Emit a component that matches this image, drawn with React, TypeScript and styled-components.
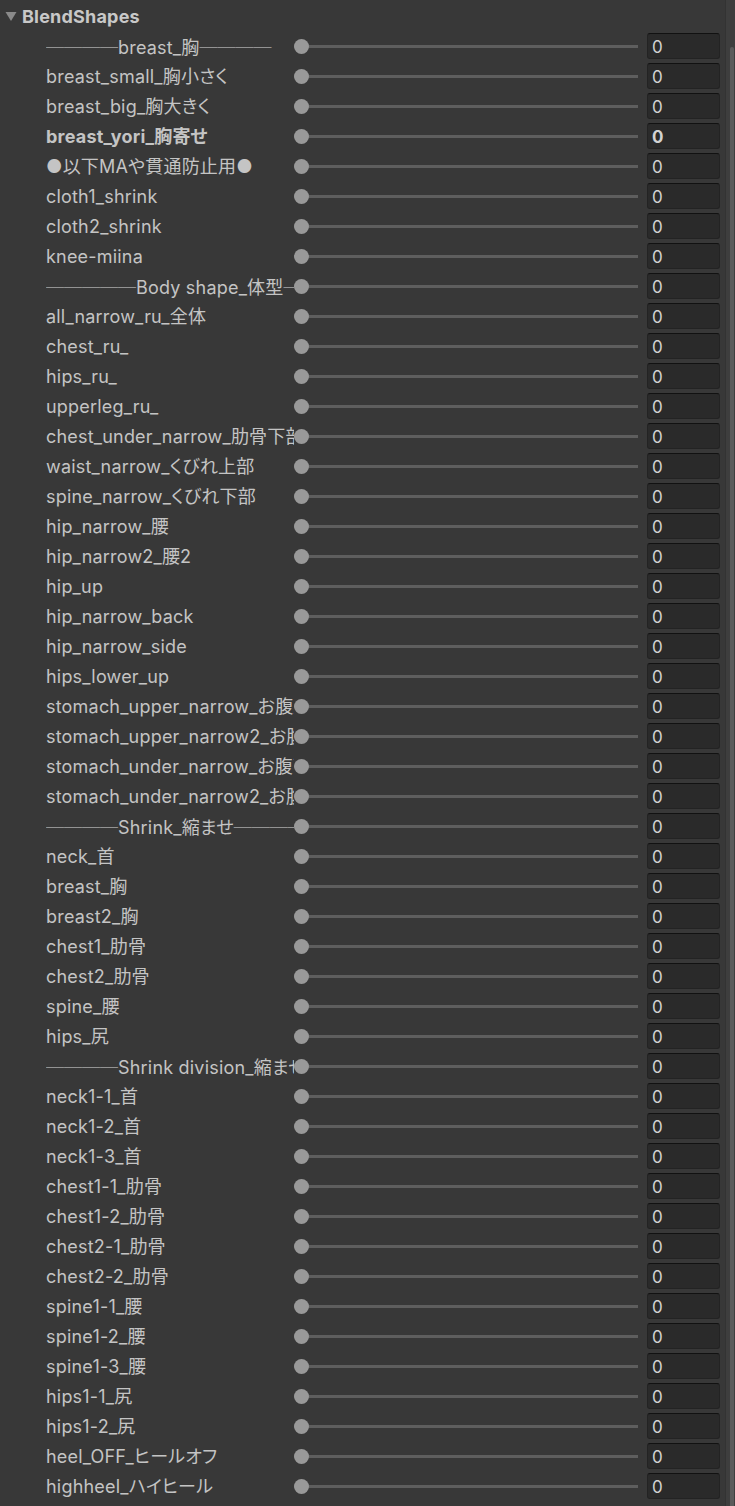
import React from 'react';
import { createGlobalStyle, styled } from 'styled-components';

type Shape = { name: string; value: number; divider?: boolean; bold?: boolean; lead?: number };

const shapes: Shape[] = [
  { name: 'breast_胸', divider: true, value: 0 },
  { name: 'breast_small_胸小さく', value: 0 },
  { name: 'breast_big_胸大きく', value: 0 },
  { name: 'breast_yori_胸寄せ', value: 0, bold: true },
  { name: '●以下MAや貫通防止用●', value: 0 },
  { name: 'cloth1_shrink', value: 0 },
  { name: 'cloth2_shrink', value: 0 },
  { name: 'knee-miina', value: 0 },
  { name: 'Body shape_体型', divider: true, lead: 5, value: 0 },
  { name: 'all_narrow_ru_全体', value: 0 },
  { name: 'chest_ru_', value: 0 },
  { name: 'hips_ru_', value: 0 },
  { name: 'upperleg_ru_', value: 0 },
  { name: 'chest_under_narrow_肋骨下部', value: 0 },
  { name: 'waist_narrow_くびれ上部', value: 0 },
  { name: 'spine_narrow_くびれ下部', value: 0 },
  { name: 'hip_narrow_腰', value: 0 },
  { name: 'hip_narrow2_腰2', value: 0 },
  { name: 'hip_up', value: 0 },
  { name: 'hip_narrow_back', value: 0 },
  { name: 'hip_narrow_side', value: 0 },
  { name: 'hips_lower_up', value: 0 },
  { name: 'stomach_upper_narrow_お腹上部', value: 0 },
  { name: 'stomach_upper_narrow2_お腹上部', value: 0 },
  { name: 'stomach_under_narrow_お腹下部', value: 0 },
  { name: 'stomach_under_narrow2_お腹下部', value: 0 },
  { name: 'Shrink_縮ませ', divider: true, value: 0 },
  { name: 'neck_首', value: 0 },
  { name: 'breast_胸', value: 0 },
  { name: 'breast2_胸', value: 0 },
  { name: 'chest1_肋骨', value: 0 },
  { name: 'chest2_肋骨', value: 0 },
  { name: 'spine_腰', value: 0 },
  { name: 'hips_尻', value: 0 },
  { name: 'Shrink division_縮ませ分割', divider: true, value: 0 },
  { name: 'neck1-1_首', value: 0 },
  { name: 'neck1-2_首', value: 0 },
  { name: 'neck1-3_首', value: 0 },
  { name: 'chest1-1_肋骨', value: 0 },
  { name: 'chest1-2_肋骨', value: 0 },
  { name: 'chest2-1_肋骨', value: 0 },
  { name: 'chest2-2_肋骨', value: 0 },
  { name: 'spine1-1_腰', value: 0 },
  { name: 'spine1-2_腰', value: 0 },
  { name: 'spine1-3_腰', value: 0 },
  { name: 'hips1-1_尻', value: 0 },
  { name: 'hips1-2_尻', value: 0 },
  { name: 'heel_OFF_ヒールオフ', value: 0 },
  { name: 'highheel_ハイヒール', value: 0 },
];

const GlobalStyle = createGlobalStyle`
  html, body {
    margin: 0;
    padding: 0;
    background: #383838;
  }
  body {
    font-family: Inter, "Noto Sans CJK JP", sans-serif;
    color: #c4c4c4;
  }
`;

const Panel = styled.div`
  position: relative;
  width: 735px;
  height: 1506px;
  background: #383838;
  overflow: hidden;
`;

const Content = styled.div`
  width: 726px;
`;

const Header = styled.div`
  display: flex;
  align-items: center;
  height: 32px;
  padding-left: 5px;
  gap: 5px;
  font-size: 18px;
  font-weight: 700;
  letter-spacing: 0.2px;
  color: #c8c8c8;
`;

const Arrow = styled.svg`
  width: 12px;
  height: 12px;
  flex: none;
`;

const List = styled.div`
  margin-top: -1px;
`;

const Row = styled.div`
  display: flex;
  align-items: center;
  height: 30px;
  padding-left: 46px;
`;

const Label = styled.div<{ $bold?: boolean }>`
  width: 248px;
  flex: none;
  overflow: hidden;
  white-space: nowrap;
  padding-top: 2px;
  font-size: 18px;
  letter-spacing: 0.2px;
  font-feature-settings: "palt";
  font-weight: ${(p) => (p.$bold ? 700 : 400)};
  line-height: 30px;
`;

const Dash = styled.span`
  font-family: "Noto Sans CJK JP", sans-serif;
  font-size: 18px;
  letter-spacing: 0;
  font-feature-settings: normal;
  color: #a8a8a8;
`;

const Slider = styled.div`
  position: relative;
  flex: none;
  width: 344px;
  height: 16px;
  display: flex;
  align-items: center;
`;

const Track = styled.div`
  width: 100%;
  height: 3px;
  background: #5e5e5e;
`;

const Knob = styled.div`
  position: absolute;
  left: 0;
  top: 0.5px;
  width: 15px;
  height: 15px;
  border-radius: 50%;
  background: #999999;
`;

const Field = styled.div<{ $bold?: boolean }>`
  box-sizing: border-box;
  margin-left: 9px;
  width: 73px;
  height: 26px;
  border: 1px solid #232323;
  border-top-color: #111111;
  border-radius: 3px;
  background: #2a2a2a;
  padding-left: 4px;
  padding-top: 1px;
  font-size: 17px;
  line-height: 24px;
  color: #d2d2d2;
  font-weight: ${(p) => (p.$bold ? 700 : 400)};
`;

const ScrollTrack = styled.div`
  position: absolute;
  top: 0;
  right: 0;
  width: 9px;
  height: 100%;
  background: #3e3e3e;
  border-left: 1px solid #333333;
`;

const ScrollThumb = styled.div`
  position: absolute;
  top: 47px;
  right: 1px;
  width: 4px;
  bottom: 0;
  border-radius: 2px 2px 0 0;
  background: #5b5b5b;
`;

const ShapeLabel = ({ shape }: { shape: Shape }) => {
  if (!shape.divider) return <>{shape.name}</>;
  return (
    <>
      <Dash>{'─'.repeat(shape.lead ?? 4)}</Dash>
      {shape.name}
      <Dash>{'─'.repeat(4)}</Dash>
    </>
  );
};

export default function App() {
  return (
    <>
      <GlobalStyle />
      <Panel>
        <Content>
          <Header>
            <Arrow viewBox="0 0 12 12">
              <path d="M0.5 2 L11.5 2 L6 11 Z" fill="#8a8a8a" />
            </Arrow>
            BlendShapes
          </Header>
          <List>
            {shapes.map((s, i) => (
              <Row key={i}>
                <Label $bold={s.bold}>
                  <ShapeLabel shape={s} />
                </Label>
                <Slider>
                  <Track />
                  <Knob />
                </Slider>
                <Field $bold={s.bold}>{s.value}</Field>
              </Row>
            ))}
          </List>
        </Content>
        <ScrollTrack>
          <ScrollThumb />
        </ScrollTrack>
      </Panel>
    </>
  );
}
